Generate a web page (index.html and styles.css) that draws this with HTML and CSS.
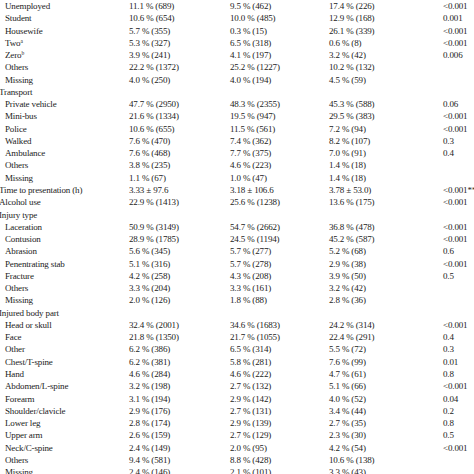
FILE: index.html
```html
<!DOCTYPE html>
<html>
<head>
<meta charset="utf-8">
<link rel="stylesheet" href="styles.css">
</head>
<body>
<div class="table">
  <div class="row"><span class="lbl sub">Unemployed</span><span>11.1 % (689)</span><span>9.5 % (462)</span><span>17.4 % (226)</span><span>&lt;0.001</span></div>
  <div class="row"><span class="lbl sub">Student</span><span>10.6 % (654)</span><span>10.0 % (485)</span><span>12.9 % (168)</span><span>0.001</span></div>
  <div class="row"><span class="lbl sub">Housewife</span><span>5.7 % (355)</span><span>0.3 % (15)</span><span>26.1 % (339)</span><span>&lt;0.001</span></div>
  <div class="row"><span class="lbl sub">Two<sup>a</sup></span><span>5.3 % (327)</span><span>6.5 % (318)</span><span>0.6 % (8)</span><span>&lt;0.001</span></div>
  <div class="row"><span class="lbl sub">Zero<sup>b</sup></span><span>3.9 % (241)</span><span>4.1 % (197)</span><span>3.2 % (42)</span><span>0.006</span></div>
  <div class="row"><span class="lbl sub">Others</span><span>22.2 % (1372)</span><span>25.2 % (1227)</span><span>10.2 % (132)</span><span></span></div>
  <div class="row"><span class="lbl sub">Missing</span><span>4.0 % (250)</span><span>4.0 % (194)</span><span>4.5 % (59)</span><span></span></div>
  <div class="row"><span class="lbl">Transport</span><span></span><span></span><span></span><span></span></div>
  <div class="row"><span class="lbl sub">Private vehicle</span><span>47.7 % (2950)</span><span>48.3 % (2355)</span><span>45.3 % (588)</span><span>0.06</span></div>
  <div class="row"><span class="lbl sub">Mini-bus</span><span>21.6 % (1334)</span><span>19.5 % (947)</span><span>29.5 % (383)</span><span>&lt;0.001</span></div>
  <div class="row"><span class="lbl sub">Police</span><span>10.6 % (655)</span><span>11.5 % (561)</span><span>7.2 % (94)</span><span>&lt;0.001</span></div>
  <div class="row"><span class="lbl sub">Walked</span><span>7.6 % (470)</span><span>7.4 % (362)</span><span>8.2 % (107)</span><span>0.3</span></div>
  <div class="row"><span class="lbl sub">Ambulance</span><span>7.6 % (468)</span><span>7.7 % (375)</span><span>7.0 % (91)</span><span>0.4</span></div>
  <div class="row"><span class="lbl sub">Others</span><span>3.8 % (235)</span><span>4.6 % (223)</span><span>1.4 % (18)</span><span></span></div>
  <div class="row"><span class="lbl sub">Missing</span><span>1.1 % (67)</span><span>1.0 % (47)</span><span>1.4 % (18)</span><span></span></div>
  <div class="row"><span class="lbl">Time to presentation (h)</span><span>3.33 ± 97.6</span><span>3.18 ± 106.6</span><span>3.78 ± 53.0)</span><span>&lt;0.001**</span></div>
  <div class="row"><span class="lbl">Alcohol use</span><span>22.9 % (1413)</span><span>25.6 % (1238)</span><span>13.6 % (175)</span><span>&lt;0.001</span></div>
  <div class="row"><span class="lbl">Injury type</span><span></span><span></span><span></span><span></span></div>
  <div class="row"><span class="lbl sub">Laceration</span><span>50.9 % (3149)</span><span>54.7 % (2662)</span><span>36.8 % (478)</span><span>&lt;0.001</span></div>
  <div class="row"><span class="lbl sub">Contusion</span><span>28.9 % (1785)</span><span>24.5 % (1194)</span><span>45.2 % (587)</span><span>&lt;0.001</span></div>
  <div class="row"><span class="lbl sub">Abrasion</span><span>5.6 % (345)</span><span>5.7 % (277)</span><span>5.2 % (68)</span><span>0.6</span></div>
  <div class="row"><span class="lbl sub">Penentrating stab</span><span>5.1 % (316)</span><span>5.7 % (278)</span><span>2.9 % (38)</span><span>&lt;0.001</span></div>
  <div class="row"><span class="lbl sub">Fracture</span><span>4.2 % (258)</span><span>4.3 % (208)</span><span>3.9 % (50)</span><span>0.5</span></div>
  <div class="row"><span class="lbl sub">Others</span><span>3.3 % (204)</span><span>3.3 % (161)</span><span>3.2 % (42)</span><span></span></div>
  <div class="row"><span class="lbl sub">Missing</span><span>2.0 % (126)</span><span>1.8 % (88)</span><span>2.8 % (36)</span><span></span></div>
  <div class="row"><span class="lbl">Injured body part</span><span></span><span></span><span></span><span></span></div>
  <div class="row"><span class="lbl sub">Head or skull</span><span>32.4 % (2001)</span><span>34.6 % (1683)</span><span>24.2 % (314)</span><span>&lt;0.001</span></div>
  <div class="row"><span class="lbl sub">Face</span><span>21.8 % (1350)</span><span>21.7 % (1055)</span><span>22.4 % (291)</span><span>0.4</span></div>
  <div class="row"><span class="lbl sub">Other</span><span>6.2 % (386)</span><span>6.5 % (314)</span><span>5.5 % (72)</span><span>0.3</span></div>
  <div class="row"><span class="lbl sub">Chest/T-spine</span><span>6.2 % (381)</span><span>5.8 % (281)</span><span>7.6 % (99)</span><span>0.01</span></div>
  <div class="row"><span class="lbl sub">Hand</span><span>4.6 % (284)</span><span>4.6 % (222)</span><span>4.7 % (61)</span><span>0.8</span></div>
  <div class="row"><span class="lbl sub">Abdomen/L-spine</span><span>3.2 % (198)</span><span>2.7 % (132)</span><span>5.1 % (66)</span><span>&lt;0.001</span></div>
  <div class="row"><span class="lbl sub">Forearm</span><span>3.1 % (194)</span><span>2.9 % (142)</span><span>4.0 % (52)</span><span>0.04</span></div>
  <div class="row"><span class="lbl sub">Shoulder/clavicle</span><span>2.9 % (176)</span><span>2.7 % (131)</span><span>3.4 % (44)</span><span>0.2</span></div>
  <div class="row"><span class="lbl sub">Lower leg</span><span>2.8 % (174)</span><span>2.9 % (139)</span><span>2.7 % (35)</span><span>0.8</span></div>
  <div class="row"><span class="lbl sub">Upper arm</span><span>2.6 % (159)</span><span>2.7 % (129)</span><span>2.3 % (30)</span><span>0.5</span></div>
  <div class="row"><span class="lbl sub">Neck/C-spine</span><span>2.4 % (149)</span><span>2.0 % (95)</span><span>4.2 % (54)</span><span>&lt;0.001</span></div>
  <div class="row"><span class="lbl sub">Others</span><span>9.4 % (581)</span><span>8.8 % (428)</span><span>10.6 % (138)</span><span></span></div>
  <div class="row"><span class="lbl sub">Missing</span><span>2.4 % (146)</span><span>2.1 % (101)</span><span>3.3 % (43)</span><span></span></div>
</div>
</body>
</html>
```

FILE: styles.css
```css
html, body {
  margin: 0;
  padding: 0;
  background: #ffffff;
}
body {
  width: 474px;
  height: 474px;
  overflow: hidden;
}
.table {
  font-family: "Liberation Serif", "Times New Roman", serif;
  font-size: 9px;
  letter-spacing: -0.15px;
  color: #222222;
  margin-left: -1px;
}
.row {
  display: grid;
  grid-template-columns: 130px 101px 99px 114px 1fr;
  height: 12.27px;
  line-height: 12.27px;
  white-space: nowrap;
}
.lbl.sub {
  padding-left: 6px;
}
sup {
  font-size: 5.5px;
  line-height: 0;
  vertical-align: 3px;
}
```
